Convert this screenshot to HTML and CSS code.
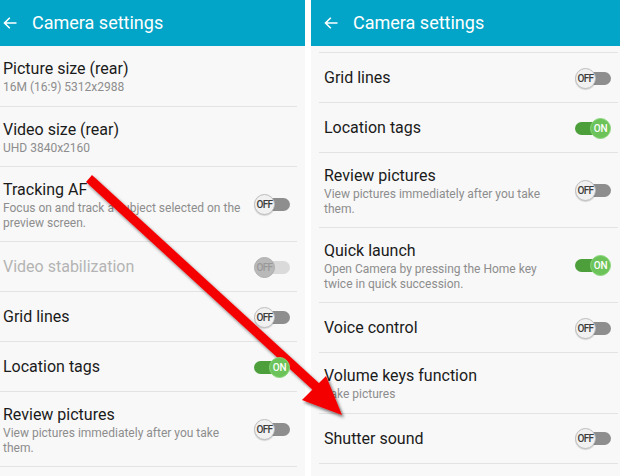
FILE: index.html
```html
<!DOCTYPE html>
<html lang="en">
<head>
    <meta charset="UTF-8">
    <meta name="viewport" content="width=device-width, initial-scale=1.0">
    <title>Camera settings</title>
    <link rel="stylesheet" href="styles.css">
</head>
<body>
    <div class="page">
        <!-- Left screenshot -->
        <section class="panel panel-left">
            <div class="screen">
                <header class="appbar">
                    <svg class="back" width="14" height="12" viewBox="0 0 14 12"><path d="M13.5 6H1.5M6.8 0.8L1.5 6l5.3 5.2" fill="none" stroke="#fff" stroke-width="1.6"/></svg>
                    <span class="appbar-title">Camera settings</span>
                </header>
                <ul class="settings">
                    <li class="row has-sub">
                        <div class="text">
                            <div class="title">Picture size (rear)</div>
                            <div class="sub">16M (16:9) 5312x2988</div>
                        </div>
                    </li>
                    <li class="row has-sub">
                        <div class="text">
                            <div class="title">Video size (rear)</div>
                            <div class="sub">UHD 3840x2160</div>
                        </div>
                    </li>
                    <li class="row has-sub">
                        <div class="text">
                            <div class="title">Tracking AF</div>
                            <div class="sub">Focus on and track a subject selected on the<br>preview screen.</div>
                        </div>
                        <span class="toggle off"><span class="thumb">OFF</span><span class="track"></span></span>
                    </li>
                    <li class="row disabled">
                        <div class="text">
                            <div class="title">Video stabilization</div>
                        </div>
                        <span class="toggle off"><span class="thumb">OFF</span><span class="track"></span></span>
                    </li>
                    <li class="row">
                        <div class="text">
                            <div class="title">Grid lines</div>
                        </div>
                        <span class="toggle off"><span class="thumb">OFF</span><span class="track"></span></span>
                    </li>
                    <li class="row">
                        <div class="text">
                            <div class="title">Location tags</div>
                        </div>
                        <span class="toggle on"><span class="track"></span><span class="thumb">ON</span></span>
                    </li>
                    <li class="row has-sub">
                        <div class="text">
                            <div class="title">Review pictures</div>
                            <div class="sub">View pictures immediately after you take<br>them.</div>
                        </div>
                        <span class="toggle off"><span class="thumb">OFF</span><span class="track"></span></span>
                    </li>
                </ul>
            </div>
        </section>

        <!-- Right screenshot, scrolled further down -->
        <section class="panel panel-right">
            <div class="screen">
                <header class="appbar">
                    <svg class="back" width="14" height="12" viewBox="0 0 14 12"><path d="M13.5 6H1.5M6.8 0.8L1.5 6l5.3 5.2" fill="none" stroke="#fff" stroke-width="1.6"/></svg>
                    <span class="appbar-title">Camera settings</span>
                </header>
                <ul class="settings">
                    <li class="row row-cut"></li>
                    <li class="row">
                        <div class="text">
                            <div class="title">Grid lines</div>
                        </div>
                        <span class="toggle off"><span class="thumb">OFF</span><span class="track"></span></span>
                    </li>
                    <li class="row">
                        <div class="text">
                            <div class="title">Location tags</div>
                        </div>
                        <span class="toggle on"><span class="track"></span><span class="thumb">ON</span></span>
                    </li>
                    <li class="row has-sub">
                        <div class="text">
                            <div class="title">Review pictures</div>
                            <div class="sub">View pictures immediately after you take<br>them.</div>
                        </div>
                        <span class="toggle off"><span class="thumb">OFF</span><span class="track"></span></span>
                    </li>
                    <li class="row has-sub">
                        <div class="text">
                            <div class="title">Quick launch</div>
                            <div class="sub">Open Camera by pressing the Home key<br>twice in quick succession.</div>
                        </div>
                        <span class="toggle on"><span class="track"></span><span class="thumb">ON</span></span>
                    </li>
                    <li class="row">
                        <div class="text">
                            <div class="title">Voice control</div>
                        </div>
                        <span class="toggle off"><span class="thumb">OFF</span><span class="track"></span></span>
                    </li>
                    <li class="row has-sub">
                        <div class="text">
                            <div class="title">Volume keys function</div>
                            <div class="sub">Take pictures</div>
                        </div>
                    </li>
                    <li class="row">
                        <div class="text">
                            <div class="title">Shutter sound</div>
                        </div>
                        <span class="toggle off"><span class="thumb">OFF</span><span class="track"></span></span>
                    </li>
                </ul>
            </div>
        </section>

        <!-- Red callout arrow drawn over both screenshots -->
        <svg class="callout" width="620" height="476" viewBox="0 0 620 476">
            <defs>
                <filter id="shadow" x="-10%" y="-10%" width="120%" height="120%">
                    <feDropShadow dx="2" dy="2.5" stdDeviation="1.6" flood-color="#000" flood-opacity="0.55"/>
                </filter>
            </defs>
            <g filter="url(#shadow)" fill="#f40000">
                <path d="M86 182 L92 175 L321 385 L315 392 Z"/>
                <path d="M342 415 L302 400 L326 376 Z"/>
            </g>
        </svg>
    </div>
</body>
</html>
```

FILE: styles.css
```css
body {
    margin: 0;
    background-color: #fff;
    font-family: Roboto, "Noto Sans", sans-serif;
}

.page {
    position: relative;
    display: flex;
    gap: 6px;
    width: 620px;
    height: 476px;
    overflow: hidden;
}

.panel {
    height: 476px;
    overflow: hidden;
    background-color: #f8f8f8;
}

.panel-left {
    width: 305px;
}

.panel-right {
    width: 309px;
}

.screen {
    width: 315px;
}

.panel-left .screen {
    margin-left: -10px;
}

/* Top bar */
.appbar {
    display: flex;
    align-items: center;
    gap: 15px;
    height: 46px;
    padding-left: 13px;
    background-color: #02a5c7;
    color: #fff;
}

.back {
    flex: none;
}

.appbar-title {
    font-size: 18px;
    line-height: 22px;
}

/* List */
.settings {
    list-style: none;
    margin: 0;
    padding: 0;
}

.row {
    display: flex;
    align-items: center;
    margin: 0 8px;
    padding: 14px 7px 13px 5px;
    border-bottom: 1px solid #e3e3e3;
}

.row.has-sub {
    padding-top: 12px;
    padding-bottom: 11px;
}

.row-cut {
    height: 6px;
    padding: 0;
}

.text {
    flex: 1;
    min-width: 0;
}

.title {
    font-size: 16px;
    line-height: 22px;
    color: #1b1b1b;
}

.sub {
    font-size: 12px;
    line-height: 14.5px;
    color: #8d8d8d;
    white-space: nowrap;
}

.disabled .title {
    color: #b4b4b4;
}

/* Switches */
.toggle {
    display: flex;
    align-items: center;
    flex: none;
    width: 36px;
}

.thumb {
    position: relative;
    z-index: 1;
    display: flex;
    align-items: center;
    justify-content: center;
    box-sizing: border-box;
    width: 21px;
    height: 21px;
    border-radius: 50%;
    font-size: 10px;
    font-weight: 500;
    letter-spacing: -0.7px;
}

.track {
    width: 26px;
    height: 13px;
}

.off .thumb {
    background-color: #f1f1f1;
    border: 1px solid #bdbdbd;
    color: #3b3b3b;
    box-shadow: 0 1px 1px rgba(0, 0, 0, 0.15);
}

.off .track {
    margin-left: -11px;
    border-radius: 0 7px 7px 0;
    background-color: #8e8e8e;
}

.on .track {
    margin-right: -11px;
    border-radius: 7px 0 0 7px;
    background-color: #4c9f3b;
}

.on .thumb {
    background-color: #6cc35a;
    border: 1px solid #8ad67b;
    color: #fff;
    letter-spacing: -0.3px;
}

.disabled .off .thumb {
    background-color: #b9b9b9;
    border-color: #adadad;
    color: #999;
    box-shadow: none;
}

.disabled .off .track {
    background-color: #dadada;
}

/* Overlay arrow */
.callout {
    position: absolute;
    top: 0;
    left: 0;
    pointer-events: none;
}
```
